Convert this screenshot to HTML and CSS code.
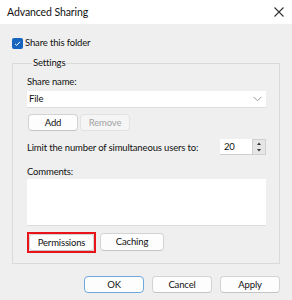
FILE: index.html
```html
<!DOCTYPE html>
<html>
<head>
  <meta charset="utf-8">
  <title>Advanced Sharing</title>
  <link rel="stylesheet" href="styles.css">
</head>
<body>
<div class="window">
  <div class="titlebar">
    <span class="title">Advanced Sharing</span>
    <svg class="close" width="10" height="10" viewBox="0 0 10 10"><path d="M0.5 0.5L9.5 9.5M9.5 0.5L0.5 9.5" stroke="#333" stroke-width="1.1" fill="none"/></svg>
  </div>
  <div class="content">
    <label class="check">
      <span class="box"><svg width="11" height="11" viewBox="0 0 11 11"><path d="M3 5.8L4.7 7.4L8 3.8" stroke="#fff" stroke-width="1" fill="none"/></svg></span>
      Share this folder
    </label>

    <fieldset class="group">
      <legend>Settings</legend>
      <div class="label">Share name:</div>
      <div class="combo">
        <span>File</span>
        <svg width="9" height="6" viewBox="0 0 9 6"><path d="M0.5 0.8L4.5 4.8L8.5 0.8" stroke="#9a9a9a" stroke-width="1" fill="none"/></svg>
      </div>
      <div class="row">
        <button class="btn small">Add</button>
        <button class="btn small" disabled>Remove</button>
      </div>
      <div class="limit">
        <span>Limit the number of simultaneous users to:</span>
        <div class="spin">
          <span class="spinval">20</span>
          <div class="spinbtns">
            <svg width="12" height="7" viewBox="0 0 12 7"><path d="M4 5L6 2.5L8 5Z" fill="#333"/></svg>
            <svg width="12" height="7" viewBox="0 0 12 7"><path d="M4 2L6 4.5L8 2Z" fill="#333"/></svg>
          </div>
        </div>
      </div>
      <div class="label comments">Comments:</div>
      <div class="textarea"></div>
      <div class="row wide">
        <span class="mark"><button class="btn perm">Permissions</button></span>
        <button class="btn cache">Caching</button>
      </div>
    </fieldset>

    <div class="footer">
      <button class="btn foot default">OK</button>
      <button class="btn foot">Cancel</button>
      <button class="btn foot">Apply</button>
    </div>
  </div>
</div>
</body>
</html>
```

FILE: styles.css
```css
body{margin:0;background:#f0f0f0;font:9.5px Lato,sans-serif;letter-spacing:-0.15px;color:#111;}
.window{width:292px;height:300px;background:#efefef;overflow:hidden;}
.titlebar{height:24px;background:#fff;display:flex;align-items:center;justify-content:space-between;padding:0 8px 0 7px;}
.title{font-size:10.5px;line-height:14px;letter-spacing:-0.1px;}
.close{margin-top:-1px;}
.content{padding:12px 12px 0 12px;}

.check{display:flex;align-items:center;height:14px;line-height:14px;}
.box{width:11px;height:11px;border-radius:2px;background:#1565c0;margin:0 2px 0 0;display:flex;}

.group{margin:6px 0 0 0;padding:5px 13px 10px 14px;border:1px solid #dadada;border-radius:0;min-width:0;}
.group legend{padding:0 1px;margin-left:5px;line-height:14px;}
.label{line-height:14px;height:14px;}

.combo{margin-top:2px;height:17px;background:#fff;border-bottom:1px solid #dedede;box-sizing:border-box;display:flex;align-items:center;justify-content:space-between;padding:0 4px 0 2px;}
.combo span{line-height:14px;}

.row{display:flex;gap:2px;margin-top:6px;padding-left:1px;}
.btn{font:9.5px Lato,sans-serif;letter-spacing:-0.15px;color:#111;background:#fdfdfd;border:1px solid #d3d3d3;border-bottom-color:#c4c4c4;border-radius:4px;padding:0;line-height:14px;}
.btn.small{width:50px;height:17px;}
.btn[disabled]{color:#a3a3a3;background:#f5f5f5;border-color:#e2e2e2;}

.limit{display:flex;align-items:center;justify-content:space-between;margin-top:8px;height:16px;white-space:nowrap;}
.spin{display:flex;height:16px;}
.spinval{width:32px;background:#fff;border-bottom:1px solid #cfcfcf;box-sizing:border-box;padding-left:4px;line-height:15px;}
.spinbtns{width:14px;display:flex;flex-direction:column;background:#e6e6e6;border:1px solid #d0d0d0;box-sizing:border-box;}
.spinbtns svg{display:block;}

.comments{margin-top:10px;}
.textarea{height:47px;background:#fff;border-bottom:1px solid #dcdcdc;box-sizing:border-box;}

.row.wide{gap:4px;margin-top:6px;padding-left:0;}
.mark{display:flex;border:2px solid #e8141a;}
.perm{width:65px;height:17px;border-radius:3px;}
.cache{width:64px;height:18px;margin-top:1px;}

.footer{display:flex;justify-content:flex-end;gap:8px;margin-top:12px;}
.btn.foot{width:60px;height:17px;}
.btn.default{border-color:#6fa9dc;}
```
